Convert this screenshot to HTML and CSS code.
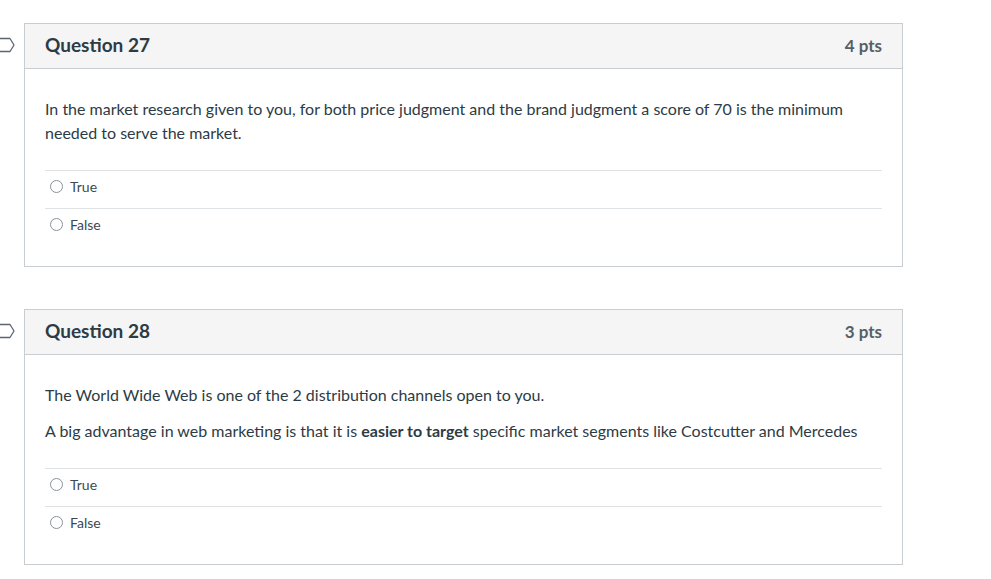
FILE: index.html
```html
<!DOCTYPE html>
<html>
<head>
<meta charset="utf-8">
<link rel="stylesheet" href="styles.css">
</head>
<body>
<div class="quiz">
  <div class="question">
    <svg class="flag" width="16" height="16" viewBox="0 0 16 16"><path d="M-4 1.5 H10 L14 8 L10 14.5 H-4" fill="none" stroke="#5a6570" stroke-width="1.3" stroke-linejoin="round"/></svg>
    <div class="card">
      <div class="card-head">
        <span class="title">Question 27</span>
        <span class="pts">4 pts</span>
      </div>
      <div class="card-body">
        <div class="text">
          <p>In the market research given to you, for both price judgment and the brand judgment a score of 70 is the minimum needed to serve the market.</p>
        </div>
        <div class="answers">
          <label class="answer"><span class="radio"></span>True</label>
          <label class="answer"><span class="radio"></span>False</label>
        </div>
      </div>
    </div>
  </div>
  <div class="question">
    <svg class="flag" width="16" height="16" viewBox="0 0 16 16"><path d="M-4 1.5 H10 L14 8 L10 14.5 H-4" fill="none" stroke="#5a6570" stroke-width="1.3" stroke-linejoin="round"/></svg>
    <div class="card">
      <div class="card-head">
        <span class="title">Question 28</span>
        <span class="pts">3 pts</span>
      </div>
      <div class="card-body">
        <div class="text">
          <p>The World Wide Web is one of the 2 distribution channels open to you.</p>
          <p>A big advantage in web marketing is that it is <strong>easier to target</strong> specific market segments like Costcutter and Mercedes</p>
        </div>
        <div class="answers">
          <label class="answer"><span class="radio"></span>True</label>
          <label class="answer"><span class="radio"></span>False</label>
        </div>
      </div>
    </div>
  </div>
</div>
</body>
</html>
```
FILE: styles.css
```css
html, body {
  margin: 0;
  padding: 0;
  background: #fff;
}
body {
  font-family: Lato, "Liberation Sans", sans-serif;
  color: #2d3b45;
}
.quiz {
  display: flex;
  flex-direction: column;
  gap: 42px;
  padding-top: 23px;
  width: 903px;
}
.question {
  position: relative;
  padding-left: 24px;
}
.flag {
  position: absolute;
  left: 0;
  top: 14px;
}
.card {
  border: 1px solid #c7cdd1;
}
.card-head {
  display: flex;
  justify-content: space-between;
  align-items: center;
  height: 44px;
  padding: 0 20px;
  background: #f5f5f5;
  border-bottom: 1px solid #c7cdd1;
}
.title {
  font-size: 19px;
  font-weight: 700;
  color: #2d3b45;
  margin-top: -4px;
}
.pts {
  font-size: 17px;
  font-weight: 700;
  color: #555f67;
  margin-top: -1px;
}
.card-body {
  padding: 28px 20px 20px;
}
.text p {
  margin: 0 0 12px;
  font-size: 16px;
  line-height: 24px;
}
.text p:last-child {
  margin-bottom: 0;
}
.answers {
  margin-top: 25px;
}
.answer {
  display: flex;
  align-items: center;
  box-sizing: border-box;
  height: 38px;
  padding-bottom: 7px;
  border-top: 1px solid #e0e3e6;
  font-size: 14px;
  color: #3c4a54;
}
.radio {
  width: 11px;
  height: 11px;
  border: 1px solid #8a9298;
  border-radius: 50%;
  margin: 0 7px 0 5px;
}
```
